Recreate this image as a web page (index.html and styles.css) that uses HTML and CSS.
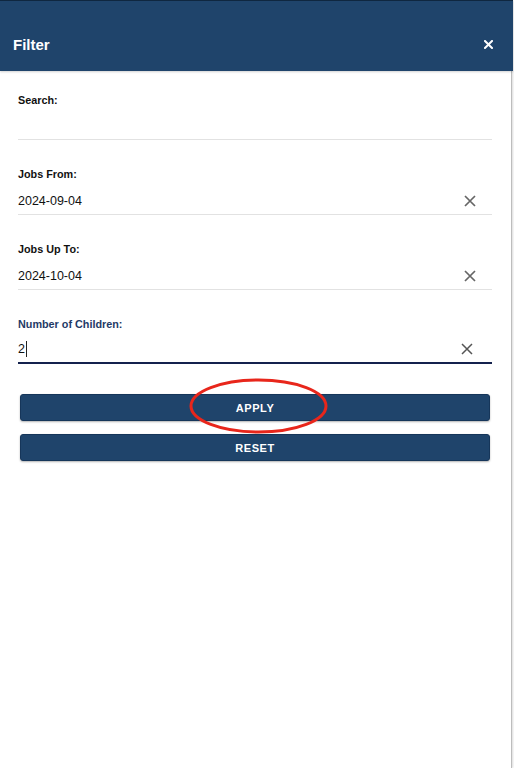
FILE: index.html
```html
<!DOCTYPE html>
<html>
<head>
<meta charset="utf-8">
<link rel="stylesheet" href="styles.css">
</head>
<body>
<div class="panel">
  <header class="header">
    <span class="title">Filter</span>
    <svg class="close" width="9" height="9" viewBox="0 0 9 9"><path d="M1 1L8 8M8 1L1 8" stroke="#fff" stroke-width="2" stroke-linecap="square"/></svg>
  </header>
  <div class="content">
    <div class="field">
      <label class="label">Search:</label>
      <div class="row row-empty"></div>
    </div>
    <div class="field">
      <label class="label">Jobs From:</label>
      <div class="row"><span class="value">2024-09-04</span>
        <svg class="clear" width="12" height="12" viewBox="0 0 12 12"><path d="M1 1L11 11M11 1L1 11" stroke="#666" stroke-width="1.7"/></svg></div>
    </div>
    <div class="field">
      <label class="label">Jobs Up To:</label>
      <div class="row"><span class="value">2024-10-04</span>
        <svg class="clear" width="12" height="12" viewBox="0 0 12 12"><path d="M1 1L11 11M11 1L1 11" stroke="#666" stroke-width="1.7"/></svg></div>
    </div>
    <div class="field active">
      <label class="label">Number of Children:</label>
      <div class="row"><span class="value">2<span class="caret"></span></span>
        <svg class="clear clear-active" width="12" height="12" viewBox="0 0 12 12"><path d="M1 1L11 11M11 1L1 11" stroke="#555" stroke-width="1.5"/></svg></div>
    </div>
    <div class="buttons">
      <div class="btn-wrap">
        <button class="btn">APPLY</button>
        <svg class="ring" width="143" height="60" viewBox="0 0 143 60"><ellipse cx="71.5" cy="30" rx="67.5" ry="26" fill="none" stroke="#e8261b" stroke-width="3"/></svg>
      </div>
      <button class="btn">RESET</button>
    </div>
  </div>
</div>
</body>
</html>
```
FILE: styles.css
```css
html, body {
  margin: 0;
  padding: 0;
  background: #ffffff;
}
body {
  font-family: "Liberation Sans", Arial, sans-serif;
  width: 514px;
  height: 768px;
  overflow: hidden;
}
.panel {
  width: 511px;
  height: 768px;
  border-right: 1px solid #bdbdbd;
  box-shadow: 1px 0 2px rgba(0,0,0,0.15);
  background: #fff;
  box-sizing: content-box;
}
.header {
  height: 71px;
  background: #1f446b;
  border-top: 1px solid #0f2740;
  box-sizing: border-box;
  display: flex;
  align-items: center;
  justify-content: space-between;
  padding: 0 20px 0 13px;
  box-shadow: 0 1px 2px rgba(0,0,0,0.18);
  width: 513px;
}
.title {
  color: #fff;
  font-weight: bold;
  font-size: 15px;
  margin-top: 16px;
}
.close {
  margin-top: 16px;
}
.content {
  padding: 22px 19px 0 18px;
}
.field {
  margin-bottom: 27px;
}
.label {
  display: block;
  font-size: 10.8px;
  line-height: 14px;
  height: 14px;
  font-weight: bold;
  color: #111;
}
.row {
  margin-top: 6px;
  height: 27px;
  border-bottom: 1px solid #e2e2e2;
  display: flex;
  align-items: center;
  justify-content: space-between;
}
.row-empty {
  height: 26px;
}
.value {
  font-size: 12.5px;
  color: #111;
  display: flex;
  align-items: center;
}
.clear {
  margin-right: 16px;
}
.clear-active {
  margin-right: 19px;
}
.active .label {
  color: #1f3a66;
}
.active .row {
  border-bottom: 2px solid #14214d;
  height: 26px;
  margin-top: 5px;
}
.caret {
  display: inline-block;
  width: 1px;
  height: 16px;
  background: #222;
  margin-left: 1px;
}
.buttons {
  margin-top: 30px;
  padding: 0 2px;
  display: flex;
  flex-direction: column;
  gap: 13px;
}
.btn-wrap {
  position: relative;
}
.btn {
  display: block;
  width: 100%;
  height: 27px;
  border: 1px solid #16365a;
  border-radius: 3px;
  background: #1f446b;
  color: #fff;
  font-family: "Liberation Sans", Arial, sans-serif;
  font-weight: bold;
  font-size: 11px;
  letter-spacing: 0.6px;
  box-shadow: 0 1px 2px rgba(0,0,0,0.3);
  padding: 0;
}
.ring {
  position: absolute;
  left: 167px;
  top: -18px;
}
```
